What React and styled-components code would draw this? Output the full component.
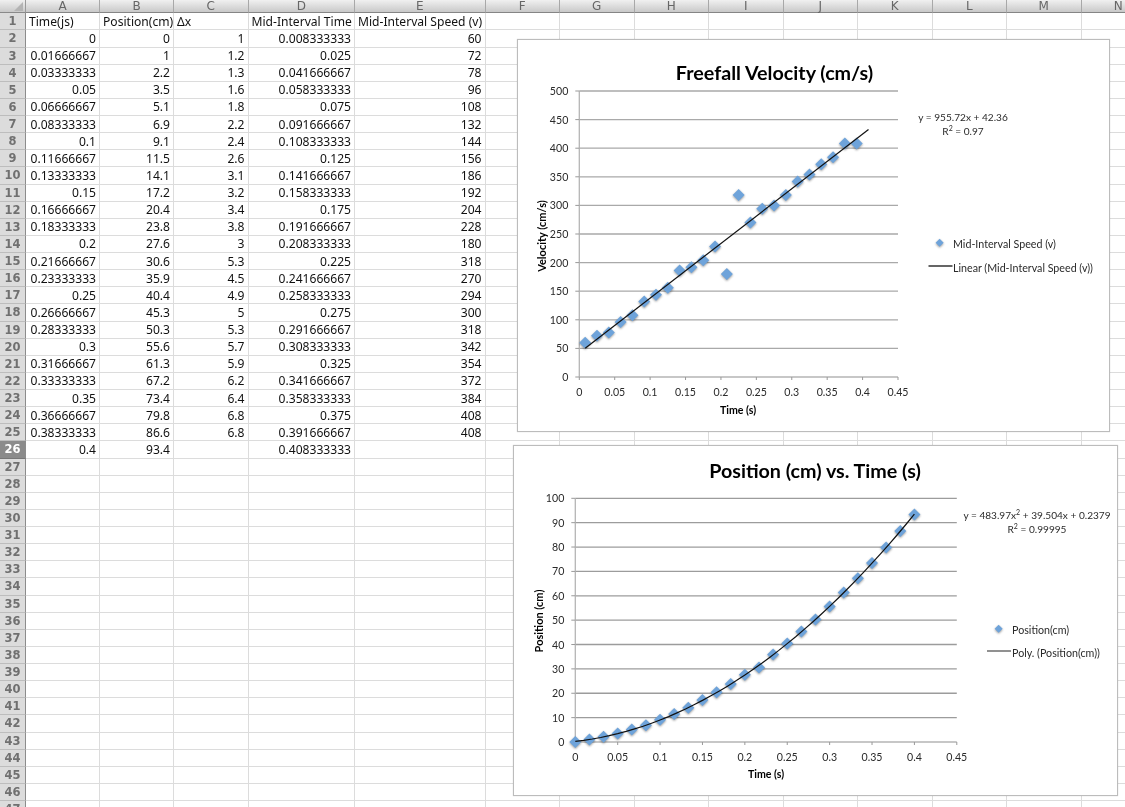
import React from "react";
import styled, { createGlobalStyle } from "styled-components";

const Global = createGlobalStyle`
  html, body { margin: 0; padding: 0; background: #fff; overflow: hidden; }
  #root { width: 1125px; height: 807px; overflow: hidden; }
`;

const Page = styled.div`
  position: relative;
  width: 1125px;
  height: 807px;
  overflow: hidden;
  background: #fff;
  filter: blur(0.4px);
`;

const Sheet = styled.div`
  display: grid;
  grid-template-columns: 26px 74px 74px 74.5px 106.5px 130.5px repeat(9, 74.5px);
  grid-template-rows: 13.3px repeat(47, 17.13px);
  font-family: "Noto Sans", sans-serif;
  font-size: 12.1px;
  color: #111;
`;

const Corner = styled.div`
  position: relative;
  background: linear-gradient(#f0f0f0, #c9c9c9);
  border-bottom: 1px solid #8a8a8a;
  border-right: 1px solid #9a9a9a;
  box-sizing: border-box;
  &::after {
    content: "";
    position: absolute;
    right: 2px;
    bottom: 1px;
    border-style: solid;
    border-width: 0 0 9px 9px;
    border-color: transparent transparent #b4b4b4 transparent;
  }
`;

const ColHead = styled.div`
  display: flex;
  align-items: center;
  justify-content: center;
  box-sizing: border-box;
  background: linear-gradient(#f0f0f0, #c9c9c9);
  border-bottom: 1.5px solid #858585;
  border-right: 1px solid #a8a8a8;
  font-family: "DejaVu Sans", sans-serif;
  font-size: 12px;
  color: #666;
`;

const RowHead = styled.div`
  display: flex;
  align-items: center;
  justify-content: center;
  box-sizing: border-box;
  background: ${p => (p.$active ? "#8b8b8b" : "#dcdcdc")};
  border-bottom: 1px solid ${p => (p.$active ? "#777" : "#bdbdbd")};
  border-right: 1.5px solid #8c8c8c;
  font-family: "DejaVu Sans", sans-serif;
  font-weight: bold;
  font-size: 11.5px;
  color: ${p => (p.$active ? "#fff" : "#707070")};
`;

const Cell = styled.div`
  display: flex;
  align-items: center;
  justify-content: ${p => (p.$left ? "flex-start" : "flex-end")};
  box-sizing: border-box;
  padding: 0 3px;
  white-space: nowrap;
  overflow: hidden;
  border-right: 1.5px solid #dcdcdc;
  border-bottom: 1.5px solid #dcdcdc;
`;

const ChartFrame = styled.div`
  position: absolute;
  left: ${p => p.$x}px;
  top: ${p => p.$y}px;
  width: ${p => p.$w}px;
  height: ${p => p.$h}px;
  box-sizing: border-box;
  background: #fff;
  border: 1.5px solid #bcbcbc;
  box-shadow: 0 0 1px rgba(0, 0, 0, 0.2);
`;

const Canvas = styled.svg`
  display: block;
  position: absolute;
  left: -1.5px;
  top: -1.5px;
  overflow: visible;
`;

const ChartText = styled.text`
  font-family: Lato, sans-serif;
  font-size: ${p => p.$size || 10.6}px;
  font-weight: ${p => (p.$bold ? 700 : 400)};
  fill: ${p => (p.$bold ? "#000" : "#2a2a2a")};
  text-anchor: ${p => p.$anchor || "middle"};
  dominant-baseline: central;
`;

const Sup = styled.tspan`
  font-size: 7px;
`;

const Points = styled.g`
  filter: drop-shadow(0 1px 1px rgba(0, 0, 0, 0.4));
`;

const COLS = "ABCDEFGHIJKLMN".split("");

const TIME = ["0", "0.01666667", "0.03333333", "0.05", "0.06666667", "0.08333333", "0.1", "0.11666667", "0.13333333", "0.15", "0.16666667", "0.18333333", "0.2", "0.21666667", "0.23333333", "0.25", "0.26666667", "0.28333333", "0.3", "0.31666667", "0.33333333", "0.35", "0.36666667", "0.38333333", "0.4"];
const POS = [0, 1, 2.2, 3.5, 5.1, 6.9, 9.1, 11.5, 14.1, 17.2, 20.4, 23.8, 27.6, 30.6, 35.9, 40.4, 45.3, 50.3, 55.6, 61.3, 67.2, 73.4, 79.8, 86.6, 93.4];
const DX = ["1", "1.2", "1.3", "1.6", "1.8", "2.2", "2.4", "2.6", "3.1", "3.2", "3.4", "3.8", "3", "5.3", "4.5", "4.9", "5", "5.3", "5.7", "5.9", "6.2", "6.4", "6.8", "6.8", ""];
const MID = ["0.008333333", "0.025", "0.041666667", "0.058333333", "0.075", "0.091666667", "0.108333333", "0.125", "0.141666667", "0.158333333", "0.175", "0.191666667", "0.208333333", "0.225", "0.241666667", "0.258333333", "0.275", "0.291666667", "0.308333333", "0.325", "0.341666667", "0.358333333", "0.375", "0.391666667", "0.408333333"];
const SPEED = [60, 72, 78, 96, 108, 132, 144, 156, 186, 192, 204, 228, 180, 318, 270, 294, 300, 318, 342, 354, 372, 384, 408, 408];

const HEADERS = ["Time(js)", "Position(cm)", "Δx", "Mid-Interval Time", "Mid-Interval Speed (v)"];

function rowCells(r) {
  if (r === 1) return HEADERS.map(h => ({ text: h, left: true }));
  const i = r - 2;
  if (i >= TIME.length) return ["", "", "", "", ""].map(text => ({ text }));
  return [TIME[i], String(POS[i]), DX[i], MID[i], SPEED[i] === undefined ? "" : String(SPEED[i])].map(text => ({ text }));
}

function Grid() {
  const rows = [];
  for (let r = 1; r <= 47; r++) {
    const cells = rowCells(r);
    rows.push(
      <RowHead key={`h${r}`} $active={r === 26}>{r}</RowHead>,
      ...COLS.map((c, i) => (
        <Cell key={`${c}${r}`} $left={cells[i]?.left}>{cells[i]?.text}</Cell>
      ))
    );
  }
  return (
    <Sheet>
      <Corner />
      {COLS.map(c => <ColHead key={c}>{c}</ColHead>)}
      {rows}
    </Sheet>
  );
}

function Diamond({ x, y, r = 6 }) {
  return <polygon points={`${x},${y - r} ${x + r},${y} ${x},${y + r} ${x - r},${y}`} fill="#6ea3da" />;
}

function Chart({ box, plot, yMax, yStep, title, titleAt, points, trend, yLabel, yLabelAt, xLabelAt, xTickY, eq, legend, gridColor }) {
  const [bx, by, bw, bh] = box;
  const { x0, x1, y0, y1 } = plot;
  const sx = t => x0 + (t / 0.45) * (x1 - x0);
  const sy = v => y0 - (v / yMax) * (y0 - y1);
  const yTicks = [];
  for (let v = 0; v <= yMax; v += yStep) yTicks.push(v);
  const xTicks = [0, 0.05, 0.1, 0.15, 0.2, 0.25, 0.3, 0.35, 0.4, 0.45];
  const trendPath = trend.map((p, i) => `${i ? "L" : "M"}${sx(p[0]).toFixed(1)} ${sy(p[1]).toFixed(1)}`).join(" ");
  return (
    <ChartFrame $x={bx} $y={by} $w={bw} $h={bh}>
      <Canvas width={bw} height={bh} viewBox={`${bx} ${by} ${bw} ${bh}`}>
        <ChartText x={titleAt[0]} y={titleAt[1]} $size={19.7} $bold>{title}</ChartText>
        {yTicks.filter(v => v > 0).map(v => (
          <line key={v} x1={x0} x2={x1} y1={sy(v)} y2={sy(v)} stroke={gridColor} strokeWidth="1.3" />
        ))}
        <line x1={x0} x2={x0} y1={y1} y2={y0} stroke="#b5b5b5" strokeWidth="1.3" />
        <line x1={x0} x2={x1} y1={y0} y2={y0} stroke="#b5b5b5" strokeWidth="1.3" />
        {yTicks.map(v => (
          <line key={v} x1={x0 - 4} x2={x0} y1={sy(v)} y2={sy(v)} stroke="#999" strokeWidth="1" />
        ))}
        {xTicks.map(t => (
          <line key={t} x1={sx(t)} x2={sx(t)} y1={y0} y2={y0 + 3} stroke="#999" strokeWidth="1" />
        ))}
        {yTicks.map(v => (
          <ChartText key={v} x={x0 - 11} y={sy(v)} $anchor="end">{v}</ChartText>
        ))}
        {xTicks.map(t => (
          <ChartText key={t} x={sx(t)} y={xTickY}>{t}</ChartText>
        ))}
        <Points>
          {points.map(([t, v], i) => <Diamond key={i} x={sx(t)} y={sy(v)} />)}
        </Points>
        <path d={trendPath} fill="none" stroke="#111" strokeWidth="1.2" />
        <ChartText x={xLabelAt[0]} y={xLabelAt[1]} $size={10.6} $bold>Time (s)</ChartText>
        <ChartText transform={`translate(${yLabelAt[0]} ${yLabelAt[1]}) rotate(-90)`} $size={11} $bold>{yLabel}</ChartText>
        <ChartText x={eq.x} y={eq.y1} $size={10.1}>{eq.line1}</ChartText>
        <ChartText x={eq.x} y={eq.y2} $size={10.1}>{eq.line2}</ChartText>
        <Points>
          <Diamond x={legend.dx} y={legend.dy} r={4} />
        </Points>
        <ChartText x={legend.tx} y={legend.dy + 1} $anchor="start" $size={10.7}>{legend.series}</ChartText>
        <line x1={legend.lx1} x2={legend.lx2} y1={legend.ly} y2={legend.ly} stroke={legend.lineColor} strokeWidth="1.3" />
        <ChartText x={legend.tx} y={legend.ly + 1} $anchor="start" $size={10.7}>{legend.fit}</ChartText>
      </Canvas>
    </ChartFrame>
  );
}

const speedPoints = SPEED.map((v, i) => [(i + 0.5) / 60, v]);
const posPoints = POS.map((v, i) => [i / 60, v]);
const linTrend = [[0.00833, 955.72 * 0.00833 + 42.36], [0.4083, 955.72 * 0.4083 + 42.36]];
const polyTrend = Array.from({ length: 41 }, (_, i) => {
  const t = i / 100;
  return [t, 483.97 * t * t + 39.504 * t + 0.2379];
});

export default function App() {
  return (
    <Page>
      <Global />
      <Grid />
      <Chart
        box={[517, 39, 593, 393]}
        plot={{ x0: 579.3, x1: 898, y0: 377, y1: 91 }}
        yMax={500}
        yStep={50}
        title="Freefall Velocity (cm/s)"
        titleAt={[774.5, 72]}
        points={speedPoints}
        trend={linTrend}
        yLabel="Velocity (cm/s)"
        yLabelAt={[541, 236]}
        xLabelAt={[738, 410]}
        xTickY={391.5}
        gridColor="#a9a9a9"
        eq={{ x: 963, y1: 117, y2: 131, line1: "y = 955.72x + 42.36", line2: <>R<Sup dy="-3">2</Sup><tspan dy="3"> = 0.97</tspan></> }}
        legend={{ dx: 939.6, dy: 242.7, tx: 953, lx1: 928.5, lx2: 952.5, ly: 266, lineColor: "#111", series: "Mid-Interval Speed (v)", fit: "Linear (Mid-Interval Speed (v))" }}
      />
      <Chart
        box={[513, 445, 605, 351]}
        plot={{ x0: 575.3, x1: 956.8, y0: 742, y1: 498.3 }}
        yMax={100}
        yStep={10}
        title="Position (cm) vs. Time (s)"
        titleAt={[815, 470]}
        points={posPoints}
        trend={polyTrend}
        yLabel="Position (cm)"
        yLabelAt={[538, 621]}
        xLabelAt={[766, 774]}
        xTickY={756.7}
        gridColor="#9c9c9c"
        eq={{ x: 1037, y1: 515, y2: 528.7, line1: <>y = 483.97x<Sup dy="-3">2</Sup><tspan dy="3"> + 39.504x + 0.2379</tspan></>, line2: <>R<Sup dy="-3">2</Sup><tspan dy="3"> = 0.99995</tspan></> }}
        legend={{ dx: 998.6, dy: 628.7, tx: 1012, lx1: 987, lx2: 1011, ly: 651, lineColor: "#555", series: "Position(cm)", fit: "Poly. (Position(cm))" }}
      />
    </Page>
  );
}
